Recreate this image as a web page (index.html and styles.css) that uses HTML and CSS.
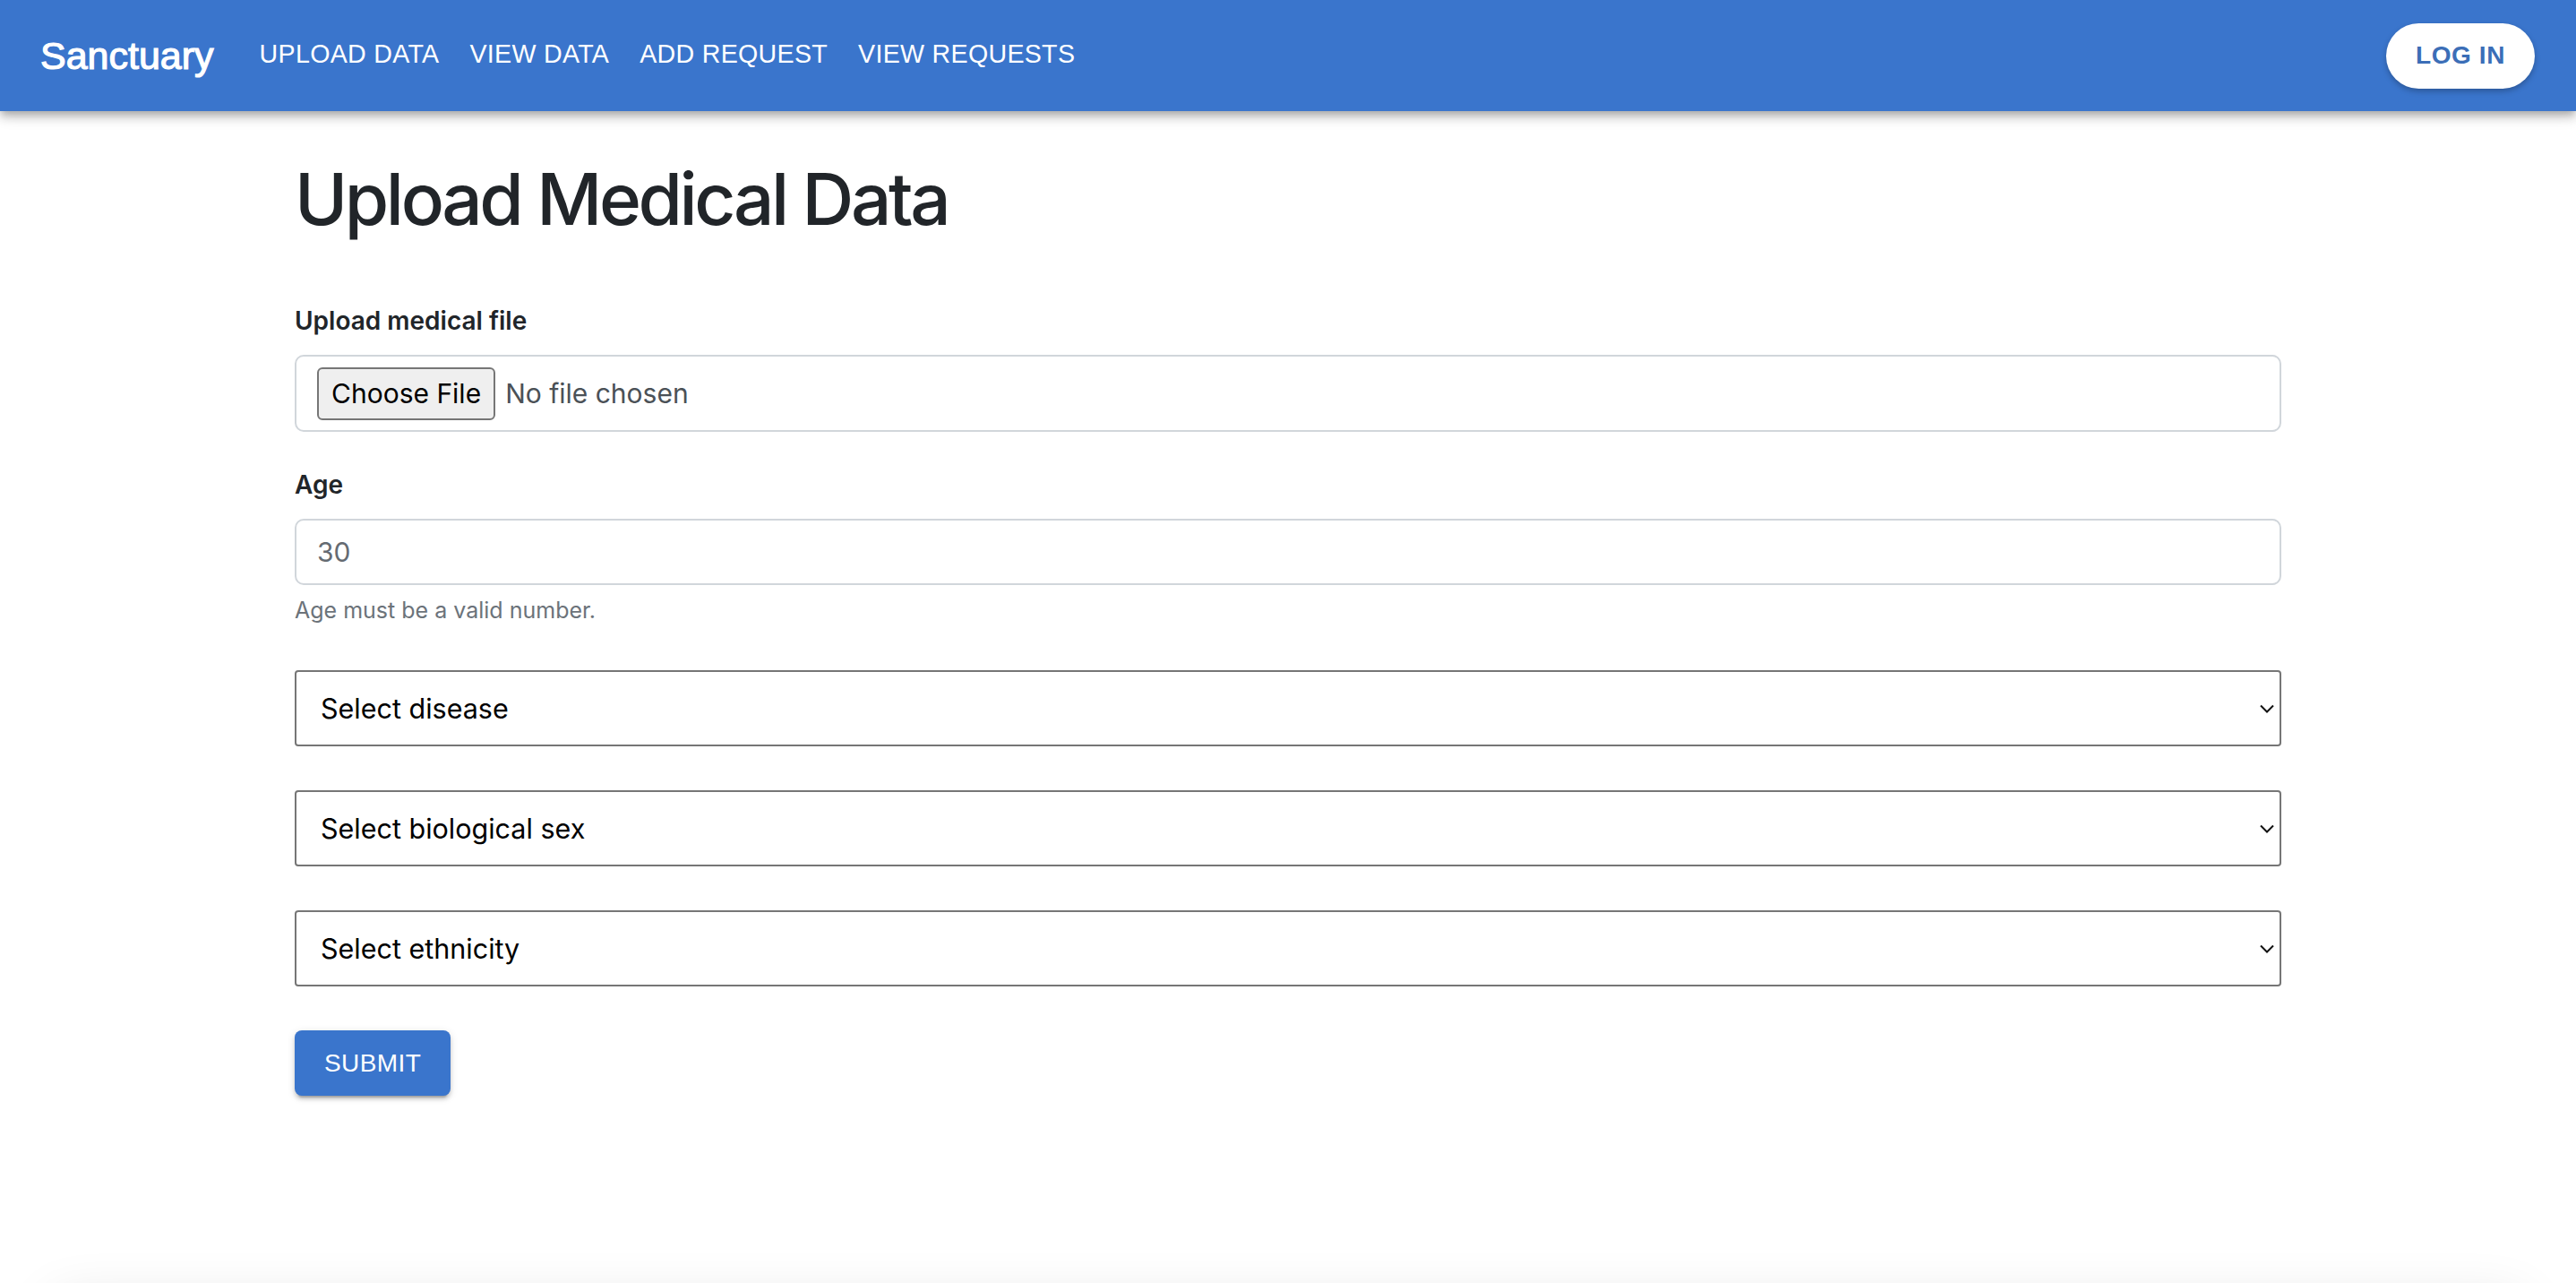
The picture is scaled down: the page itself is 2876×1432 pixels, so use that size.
FILE: index.html
```html
<!DOCTYPE html>
<html lang="en">
<head>
    <meta charset="UTF-8">
    <meta name="viewport" content="width=device-width, initial-scale=1.0">
    <title>Sanctuary - Upload Medical Data</title>
    <link rel="stylesheet" href="styles.css">
</head>
<body>
    <header class="app-bar">
        <div class="brand">Sanctuary</div>
        <nav class="nav-links">
            <a href="#" class="nav-link">Upload Data</a>
            <a href="#" class="nav-link">View Data</a>
            <a href="#" class="nav-link">Add Request</a>
            <a href="#" class="nav-link">View Requests</a>
        </nav>
        <button class="login-btn">Log In</button>
    </header>

    <main class="page">
        <div class="container">
            <h1>Upload Medical Data</h1>

            <form onsubmit="return false;">
                <div class="field">
                    <label class="form-label">Upload medical file</label>
                    <div class="file-input">
                        <button type="button" class="file-btn">Choose File</button>
                        <span class="file-name">No file chosen</span>
                    </div>
                </div>

                <div class="field field-age">
                    <label class="form-label" for="age">Age</label>
                    <input type="text" id="age" class="form-control" placeholder="30">
                    <div class="form-text">Age must be a valid number.</div>
                </div>

                <div class="select-wrap">
                    <select class="form-select">
                        <option>Select disease</option>
                    </select>
                    <svg class="chevron" width="16" height="10" viewBox="0 0 16 10"><polyline points="1,1.5 8,8.5 15,1.5" fill="none" stroke="#111" stroke-width="2"/></svg>
                </div>

                <div class="select-wrap">
                    <select class="form-select">
                        <option>Select biological sex</option>
                    </select>
                    <svg class="chevron" width="16" height="10" viewBox="0 0 16 10"><polyline points="1,1.5 8,8.5 15,1.5" fill="none" stroke="#111" stroke-width="2"/></svg>
                </div>

                <div class="select-wrap">
                    <select class="form-select">
                        <option>Select ethnicity</option>
                    </select>
                    <svg class="chevron" width="16" height="10" viewBox="0 0 16 10"><polyline points="1,1.5 8,8.5 15,1.5" fill="none" stroke="#111" stroke-width="2"/></svg>
                </div>

                <button type="submit" class="submit-btn">Submit</button>
            </form>
        </div>
    </main>

    <footer class="page-footer"></footer>
</body>
</html>
```

FILE: styles.css
```css
body {
    margin: 0;
    font-family: Inter, "Noto Sans", sans-serif;
    color: #212529;
    background: #fff;
}
.app-bar {
    display: flex;
    align-items: center;
    height: 124px;
    padding: 0 46px 0 45px;
    background: #3a75cc;
    color: white;
    box-shadow: 0 4px 8px -2px rgba(0,0,0,0.2), 0 8px 10px 0 rgba(0,0,0,0.14), 0 2px 20px 0 rgba(0,0,0,0.12);
    position: relative;
    z-index: 2;
}
.brand {
    font-family: "Liberation Sans", Arial, sans-serif;
    font-size: 43px;
    -webkit-text-stroke: 1.2px white;
    margin-right: 34px;
}
.nav-links {
    display: flex;
    margin-bottom: 3px;
}
.nav-link {
    font-family: "Liberation Sans", Arial, sans-serif;
    font-size: 28.6px;
    letter-spacing: 0.3px;
    text-transform: uppercase;
    color: white;
    text-decoration: none;
    padding: 0 17px;
}
.login-btn {
    margin-left: auto;
    height: 73px;
    padding: 0 33px;
    border: none;
    border-radius: 999px;
    background: white;
    color: #3b6eb7;
    font-family: "Liberation Sans", Arial, sans-serif;
    font-size: 28px;
    font-weight: bold;
    letter-spacing: 0.6px;
    text-transform: uppercase;
    box-shadow: 0 3px 6px rgba(0,0,0,0.25);
    cursor: pointer;
}
.page {
    min-height: calc(100vh - 124px);
}
.container {
    width: 2218px;
    margin: 0 auto;
}
h1 {
    font-size: 80px;
    font-weight: 500;
    line-height: 96px;
    letter-spacing: -3.4px;
    margin: 50px 0 69px;
}
.form-label {
    display: block;
    font-size: 28px;
    font-weight: 600;
    line-height: 39px;
    margin-bottom: 18px;
}
.field {
    margin-bottom: 40px;
}
.field-age {
    margin-bottom: 49px;
}
.file-input {
    display: flex;
    align-items: center;
    height: 82px;
    padding: 0 23px;
    border: 2px solid #d1d6db;
    border-radius: 10px;
}
.file-btn {
    height: 59px;
    padding: 0 14px;
    background: #efefef;
    border: 2px solid #767676;
    border-radius: 6px;
    font-family: Inter, "Noto Sans", sans-serif;
    font-size: 30px;
    color: #000;
}
.file-name {
    margin-left: 11px;
    font-size: 30px;
    color: #4b5157;
}
.form-control {
    display: block;
    box-sizing: border-box;
    width: 100%;
    height: 74px;
    padding: 0 23px;
    border: 2px solid #d1d6db;
    border-radius: 10px;
    font-family: Inter, "Noto Sans", sans-serif;
    font-size: 30px;
    color: #212529;
    outline: none;
}
.form-control::placeholder {
    color: #656b72;
}
.form-text {
    margin-top: 10px;
    font-size: 25px;
    line-height: 36px;
    color: #6c737a;
}
.select-wrap {
    position: relative;
    margin-bottom: 49px;
}
.form-select {
    display: block;
    box-sizing: border-box;
    width: 100%;
    height: 85px;
    padding: 0 44px 0 27px;
    appearance: none;
    -webkit-appearance: none;
    background: white;
    border: 2px solid #767676;
    border-radius: 4px;
    font-family: Inter, "Noto Sans", sans-serif;
    font-size: 30.5px;
    color: #000;
}
.chevron {
    position: absolute;
    right: 8px;
    top: 38px;
    pointer-events: none;
}
.submit-btn {
    height: 73px;
    padding: 0 33px;
    border: none;
    border-radius: 8px;
    background: #3a75cc;
    color: white;
    font-family: "Liberation Sans", Arial, sans-serif;
    font-size: 28px;
    letter-spacing: 0.4px;
    text-transform: uppercase;
    box-shadow: 0 6px 2px -4px rgba(0,0,0,0.2), 0 4px 4px 0 rgba(0,0,0,0.14), 0 2px 10px 0 rgba(0,0,0,0.12);
    cursor: pointer;
}
.page-footer {
    height: 0;
    margin: 0 90px;
    box-shadow: 0 0 60px 30px rgba(0,0,0,0.12);
}
```
